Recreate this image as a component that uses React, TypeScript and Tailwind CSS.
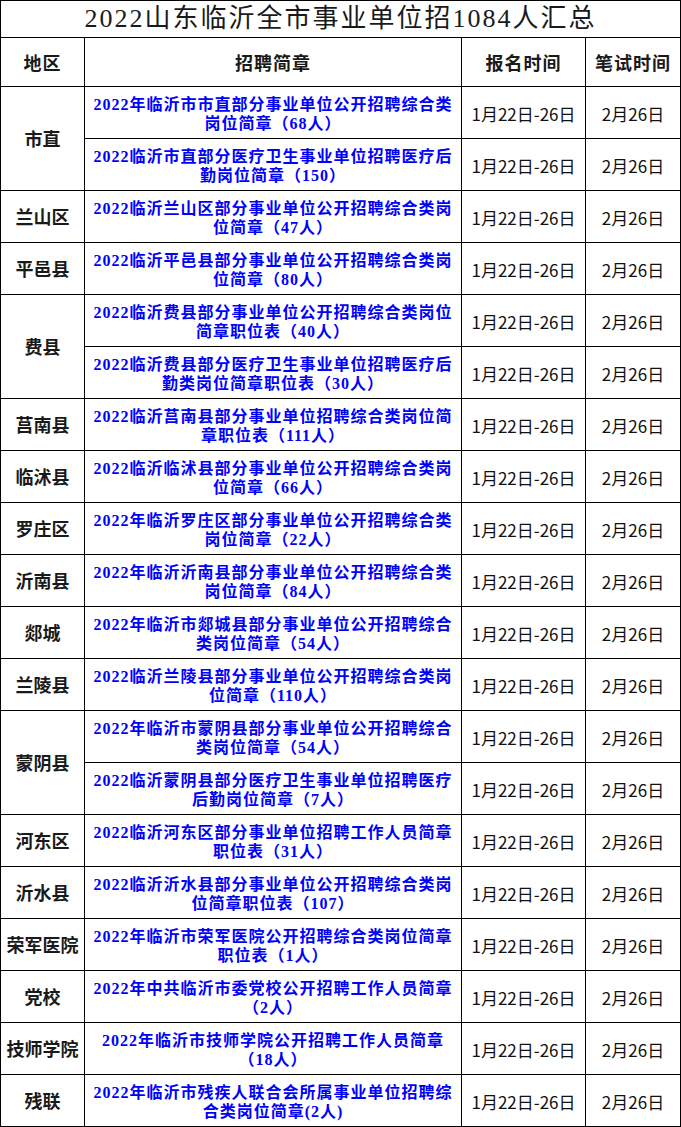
import React from 'react';

// one region, one or more announcement rows (two text lines each)
type Region = { name: string; items: Array<[string, string]> };

const regions: Region[] = [
  {
    name: '市直',
    items: [
      ['2022年临沂市市直部分事业单位公开招聘综合类', '岗位简章（68人）'],
      ['2022临沂市直部分医疗卫生事业单位招聘医疗后', '勤岗位简章（150）'],
    ],
  },
  { name: '兰山区', items: [['2022临沂兰山区部分事业单位公开招聘综合类岗', '位简章（47人）']] },
  { name: '平邑县', items: [['2022临沂平邑县部分事业单位公开招聘综合类岗', '位简章（80人）']] },
  {
    name: '费县',
    items: [
      ['2022临沂费县部分事业单位公开招聘综合类岗位', '简章职位表（40人）'],
      ['2022临沂费县部分医疗卫生事业单位招聘医疗后', '勤类岗位简章职位表（30人）'],
    ],
  },
  { name: '莒南县', items: [['2022临沂莒南县部分事业单位招聘综合类岗位简', '章职位表（111人）']] },
  { name: '临沭县', items: [['2022临沂临沭县部分事业单位公开招聘综合类岗', '位简章（66人）']] },
  { name: '罗庄区', items: [['2022年临沂罗庄区部分事业单位公开招聘综合类', '岗位简章（22人）']] },
  { name: '沂南县', items: [['2022年临沂沂南县部分事业单位公开招聘综合类', '岗位简章（84人）']] },
  { name: '郯城', items: [['2022年临沂市郯城县部分事业单位公开招聘综合', '类岗位简章（54人）']] },
  { name: '兰陵县', items: [['2022临沂兰陵县部分事业单位公开招聘综合类岗', '位简章（110人）']] },
  {
    name: '蒙阴县',
    items: [
      ['2022年临沂市蒙阴县部分事业单位公开招聘综合', '类岗位简章（54人）'],
      ['2022临沂蒙阴县部分医疗卫生事业单位招聘医疗', '后勤岗位简章（7人）'],
    ],
  },
  { name: '河东区', items: [['2022临沂河东区部分事业单位招聘工作人员简章', '职位表（31人）']] },
  { name: '沂水县', items: [['2022临沂沂水县部分事业单位公开招聘综合类岗', '位简章职位表（107）']] },
  { name: '荣军医院', items: [['2022年临沂市荣军医院公开招聘综合类岗位简章', '职位表（1人）']] },
  { name: '党校', items: [['2022年中共临沂市委党校公开招聘工作人员简章', '（2人）']] },
  { name: '技师学院', items: [['2022年临沂市技师学院公开招聘工作人员简章', '（18人）']] },
  { name: '残联', items: [['2022年临沂市残疾人联合会所属事业单位招聘综', '合类岗位简章(2人)']] },
];

const serif = "font-['Liberation_Serif','Noto_Sans_CJK_SC',serif]";
const sans = "font-['Noto_Sans_CJK_SC',sans-serif]";

const cell = 'border-r border-b border-black flex items-center justify-center';

const rowSpans: Record<number, string> = {
  1: 'row-span-1',
  2: 'row-span-2',
};

export default function App() {
  return (
    <div className="w-[681px] bg-white">
      <div className="grid grid-cols-[84px_377px_124px_95px] grid-rows-[37px_49px_repeat(20,52px)] border-l border-t border-black">
        <div
          className={`${cell} col-span-4 text-[26px] tracking-[2px] text-[#1a1a1a] leading-none ${serif}`}
        >
          2022山东临沂全市事业单位招1084人汇总
        </div>

        <div className={`${cell} text-[18px] font-bold tracking-[1px] text-[#1a1a1a] ${sans}`}>地区</div>
        <div className={`${cell} text-[18px] font-bold tracking-[1px] text-[#1a1a1a] ${sans}`}>招聘简章</div>
        <div className={`${cell} text-[18px] font-bold tracking-[1px] text-[#1a1a1a] ${sans}`}>报名时间</div>
        <div className={`${cell} text-[18px] font-bold tracking-[1px] text-[#1a1a1a] ${sans}`}>笔试时间</div>

        {regions.map((region) =>
          region.items.map((item, i) => (
            <React.Fragment key={region.name + i}>
              {i === 0 && (
                <div
                  className={`${cell} ${rowSpans[region.items.length]} text-[18px] font-bold text-[#1a1a1a] ${sans}`}
                >
                  {region.name}
                </div>
              )}
              <div
                className={`${cell} flex-col text-[16px] leading-[19px] tracking-[1px] font-bold text-[#0000ff] pt-[3px] ${serif}`}
              >
                <span className="whitespace-nowrap">{item[0]}</span>
                <span className="whitespace-nowrap">{item[1]}</span>
              </div>
              <div className={`${cell} pt-[3px] text-[17px] text-[#111] ${sans}`}>1月22日-26日</div>
              <div className={`${cell} pt-[3px] text-[17px] text-[#111] ${sans}`}>2月26日</div>
            </React.Fragment>
          ))
        )}
      </div>
    </div>
  );
}
